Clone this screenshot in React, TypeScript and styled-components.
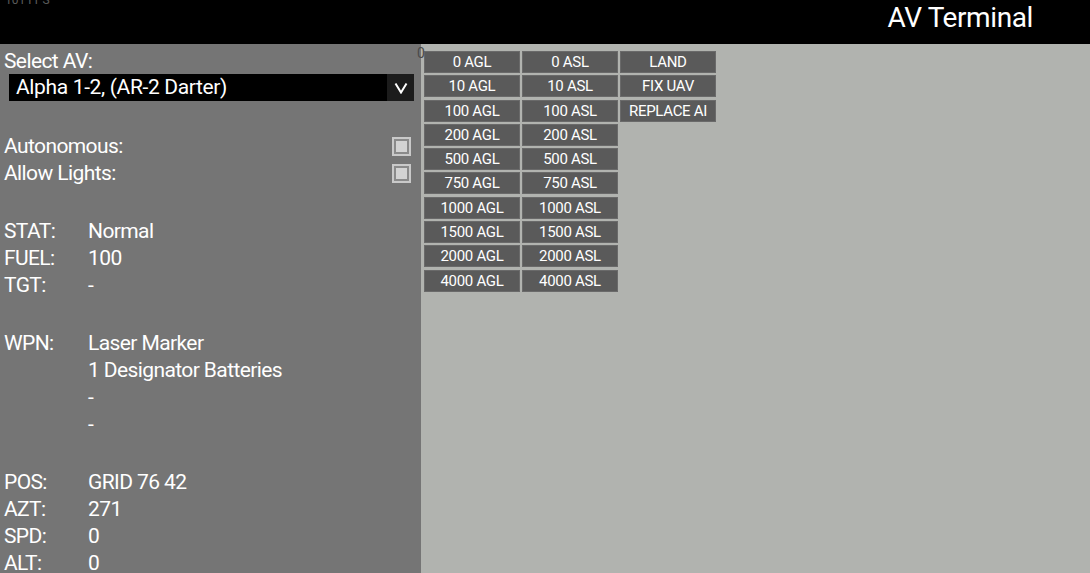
import * as React from 'react'
import styled, { createGlobalStyle } from 'styled-components'

const GlobalStyle = createGlobalStyle`
  html, body {
    margin: 0;
    padding: 0;
    background: #b1b3af;
    overflow: hidden;
  }
  body {
    font-family: Roboto, "Liberation Sans", sans-serif;
  }
`

const Screen = styled.div`
  width: 1090px;
  height: 573px;
  display: flex;
  flex-direction: column;
  background: #b1b3af;
`

const TopBar = styled.div`
  position: relative;
  height: 44px;
  background: #000;
  display: flex;
  align-items: center;
  justify-content: flex-end;
  padding-right: 57px;
  flex-shrink: 0;
`

const Title = styled.div`
  color: #fff;
  font-size: 28px;
  letter-spacing: -0.4px;
  line-height: 1;
  margin-top: -8px;
`

const Fps = styled.div`
  position: absolute;
  left: 5px;
  top: -7px;
  font-size: 12px;
  color: #5a5a5a;
`

const Body = styled.div`
  flex: 1;
  display: flex;
  min-height: 0;
`

const SidePanel = styled.div`
  width: 421px;
  flex-shrink: 0;
  background: #757575;
  color: #fff;
  padding: 5px 0 0 4px;
  box-sizing: border-box;
  font-size: 21px;
  letter-spacing: -0.6px;
  overflow: hidden;
`

const Label = styled.div`
  height: 25px;
  line-height: 24px;
`

const Select = styled.div`
  margin: 0 7px 0 5px;
  height: 27px;
  background: #000;
  display: flex;
  align-items: center;
`

const SelectText = styled.div`
  flex: 1;
  padding-left: 7px;
  font-size: 21px;
  letter-spacing: -0.35px;
  line-height: 27px;
`

const SelectArrow = styled.div`
  width: 27px;
  height: 27px;
  background: #1c1c1c;
  display: flex;
  align-items: center;
  justify-content: center;
`

const Spacer = styled.div<{ h: number }>`
  height: ${p => p.h}px;
`

const Row = styled.div`
  height: 27px;
  line-height: 27px;
  display: flex;
  align-items: center;
`

const Key = styled.div`
  width: 84px;
  flex-shrink: 0;
`

const CheckRow = styled(Row)`
  justify-content: space-between;
  padding-right: 10px;
`

const Check = styled.div`
  width: 19px;
  height: 19px;
  box-sizing: border-box;
  border: 2px solid #c9c9c9;
  background: #8a8a8a;
  display: flex;
  align-items: center;
  justify-content: center;
  &::after {
    content: '';
    width: 11px;
    height: 11px;
    background: #d3d3d3;
  }
`

const ButtonArea = styled.div`
  position: relative;
  flex: 1;
  padding: 7px 0 0 3px;
`

const Marker = styled.div`
  position: absolute;
  left: -4px;
  top: 1px;
  font-size: 14px;
  color: #4a4a4a;
`

const Grid = styled.div`
  display: grid;
  grid-template-columns: repeat(3, 96px);
  grid-auto-rows: 22px;
  column-gap: 2px;
  row-gap: 2.3px;
`

const Btn = styled.div<{ col: number }>`
  grid-column: ${p => p.col};
  background: #5a5a5a;
  border: 1px solid #6a6a6a;
  box-sizing: border-box;
  color: #fff;
  font-size: 15px;
  letter-spacing: -0.3px;
  display: flex;
  align-items: center;
  justify-content: center;
`

const heights = [0, 10, 100, 200, 500, 750, 1000, 1500, 2000, 4000]
const actions = ['LAND', 'FIX UAV', 'REPLACE AI']

const info: [string, string[]][][] = [
  [
    ['STAT:', ['Normal']],
    ['FUEL:', ['100']],
    ['TGT:', ['-']],
  ],
  [['WPN:', ['Laser Marker', '1 Designator Batteries', '-', '-']]],
  [
    ['POS:', ['GRID 76 42']],
    ['AZT:', ['271']],
    ['SPD:', ['0']],
    ['ALT:', ['0']],
  ],
]

const App: React.FC = () => (
  <Screen>
    <GlobalStyle />
    <TopBar>
      <Fps>101 FPS</Fps>
      <Title>AV Terminal</Title>
    </TopBar>
    <Body>
      <SidePanel>
        <Label>Select AV:</Label>
        <Select>
          <SelectText>Alpha 1-2, (AR-2 Darter)</SelectText>
          <SelectArrow>
            <svg width="14" height="12" viewBox="0 0 14 12">
              <path d="M1.5 1.5 L7 10.5 L12.5 1.5" fill="none" stroke="#fff" strokeWidth="2" />
            </svg>
          </SelectArrow>
        </Select>
        <Spacer h={32} />
        <CheckRow>
          <span>Autonomous:</span>
          <Check />
        </CheckRow>
        <CheckRow>
          <span>Allow Lights:</span>
          <Check />
        </CheckRow>
        {info.map((group, gi) => (
          <React.Fragment key={gi}>
            <Spacer h={31} />
            {group.map(([k, vals]) =>
              vals.map((v, i) => (
                <Row key={k + i}>
                  <Key>{i === 0 ? k : ''}</Key>
                  <span>{v}</span>
                </Row>
              ))
            )}
          </React.Fragment>
        ))}
      </SidePanel>
      <ButtonArea>
        <Marker>0</Marker>
        <Grid>
          {heights.map((h, i) => (
            <React.Fragment key={h}>
              <Btn col={1}>{h} AGL</Btn>
              <Btn col={2}>{h} ASL</Btn>
              {actions[i] && <Btn col={3}>{actions[i]}</Btn>}
            </React.Fragment>
          ))}
        </Grid>
      </ButtonArea>
    </Body>
  </Screen>
)

export default App
